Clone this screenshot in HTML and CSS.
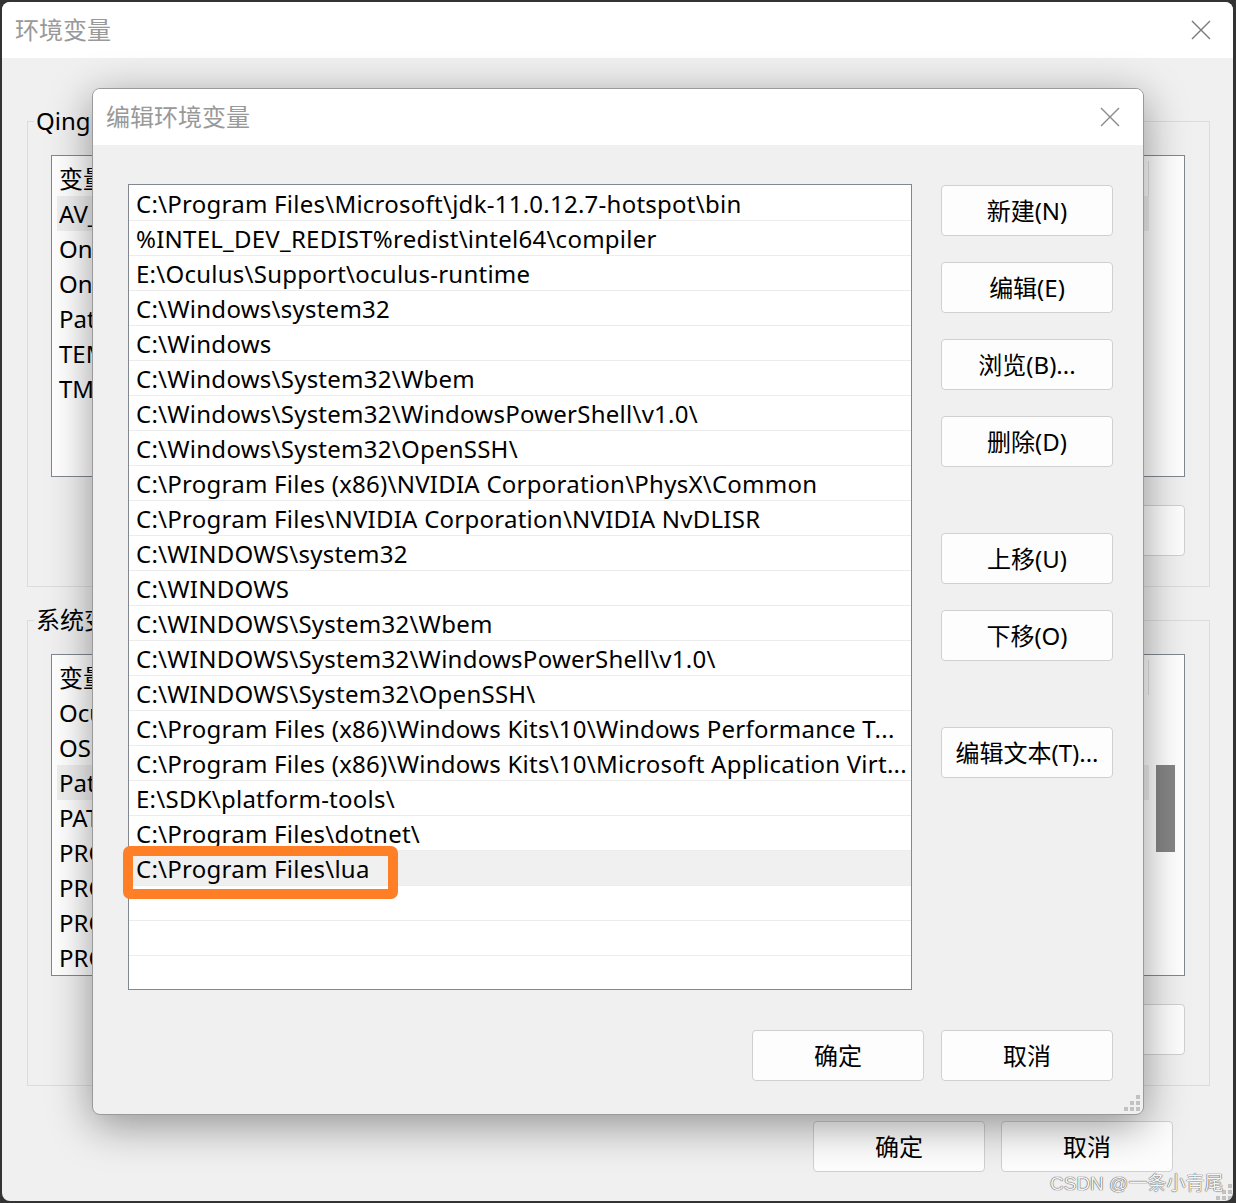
FILE: index.html
```html
<!DOCTYPE html>
<html>
  <head>
    <meta charset="utf-8">
    <title>环境变量</title>
    <link rel="stylesheet" href="styles.css">
  </head>
  <body>
    <div class="win">
      <div class="titlebar">
        <span class="title">环境变量</span>
        <svg class="close" width="20" height="20" viewBox="0 0 20 20"><path d="M1 1L19 19M19 1L1 19"/></svg>
      </div>

      <div class="win-body">
        <fieldset class="group">
          <legend>Qing 的用户变量(U)</legend>
          <div class="lv">
            <div class="lv-cols">
              <div class="lv-row lv-head"><span class="c-name">变量</span><span class="c-val"></span></div>
              <div class="lv-row sel"><span class="c-name">AV_HOME</span><span class="c-val"></span></div>
              <div class="lv-row"><span class="c-name">OneDrive</span><span class="c-val"></span></div>
              <div class="lv-row"><span class="c-name">OneDrive</span><span class="c-val"></span></div>
              <div class="lv-row"><span class="c-name">Path</span><span class="c-val"></span></div>
              <div class="lv-row"><span class="c-name">TEMP</span><span class="c-val"></span></div>
              <div class="lv-row"><span class="c-name">TMP</span><span class="c-val"></span></div>
            </div>
          </div>
          <div class="group-btns">
            <button class="btn">新建(N)...</button>
            <button class="btn">编辑(E)...</button>
            <button class="btn">删除(D)</button>
          </div>
        </fieldset>

        <fieldset class="group">
          <legend>系统变量(S)</legend>
          <div class="lv">
            <div class="lv-cols">
              <div class="lv-row lv-head"><span class="c-name">变量</span><span class="c-val"></span></div>
              <div class="lv-row"><span class="c-name">Oculus</span><span class="c-val"></span></div>
              <div class="lv-row"><span class="c-name">OS</span><span class="c-val"></span></div>
              <div class="lv-row sel"><span class="c-name">Path</span><span class="c-val"></span></div>
              <div class="lv-row"><span class="c-name">PATH</span><span class="c-val"></span></div>
              <div class="lv-row"><span class="c-name">PROC</span><span class="c-val"></span></div>
              <div class="lv-row"><span class="c-name">PROC</span><span class="c-val"></span></div>
              <div class="lv-row"><span class="c-name">PROC</span><span class="c-val"></span></div>
              <div class="lv-row"><span class="c-name">PROC</span><span class="c-val"></span></div>
            </div>
            <div class="lv-scroll"><div class="thumb"></div></div>
          </div>
          <div class="group-btns">
            <button class="btn">新建(W)...</button>
            <button class="btn">编辑(I)...</button>
            <button class="btn">删除(L)</button>
          </div>
        </fieldset>

        <div class="win-btns">
          <button class="btn">确定</button>
          <button class="btn">取消</button>
        </div>
      </div>

      <svg class="grip win-grip" width="16" height="16" viewBox="0 0 16 16"><path d="M12 0h4v4h-4zM6 6h4v4H6zM12 6h4v4h-4zM0 12h4v4H0zM6 12h4v4H6zM12 12h4v4h-4z"/></svg>

      <!-- 编辑环境变量 dialog, on top of the main window -->
      <div class="dialog">
        <div class="dlg-title">
          <span class="title">编辑环境变量</span>
          <svg class="close" width="20" height="20" viewBox="0 0 20 20"><path d="M1 1L19 19M19 1L1 19"/></svg>
        </div>
        <div class="dlg-body">
          <div class="dlg-main">
            <div class="paths">
              <div class="path">C:\Program Files\Microsoft\jdk-11.0.12.7-hotspot\bin</div>
              <div class="path">%INTEL_DEV_REDIST%redist\intel64\compiler</div>
              <div class="path">E:\Oculus\Support\oculus-runtime</div>
              <div class="path">C:\Windows\system32</div>
              <div class="path">C:\Windows</div>
              <div class="path">C:\Windows\System32\Wbem</div>
              <div class="path">C:\Windows\System32\WindowsPowerShell\v1.0\</div>
              <div class="path">C:\Windows\System32\OpenSSH\</div>
              <div class="path">C:\Program Files (x86)\NVIDIA Corporation\PhysX\Common</div>
              <div class="path">C:\Program Files\NVIDIA Corporation\NVIDIA NvDLISR</div>
              <div class="path">C:\WINDOWS\system32</div>
              <div class="path">C:\WINDOWS</div>
              <div class="path">C:\WINDOWS\System32\Wbem</div>
              <div class="path">C:\WINDOWS\System32\WindowsPowerShell\v1.0\</div>
              <div class="path">C:\WINDOWS\System32\OpenSSH\</div>
              <div class="path">C:\Program Files (x86)\Windows Kits\10\Windows Performance T...</div>
              <div class="path">C:\Program Files (x86)\Windows Kits\10\Microsoft Application Virt...</div>
              <div class="path">E:\SDK\platform-tools\</div>
              <div class="path">C:\Program Files\dotnet\</div>
              <div class="path sel">C:\Program Files\lua</div>
              <div class="path"></div>
              <div class="path"></div>
              <div class="path"></div>
            </div>
            <div class="side">
              <button class="btn">新建(N)</button>
              <button class="btn">编辑(E)</button>
              <button class="btn">浏览(B)...</button>
              <button class="btn">删除(D)</button>
              <button class="btn gap">上移(U)</button>
              <button class="btn">下移(O)</button>
              <button class="btn gap">编辑文本(T)...</button>
            </div>
          </div>
          <div class="dlg-foot">
            <button class="btn">确定</button>
            <button class="btn">取消</button>
          </div>
          <div class="mark"></div>
        </div>
        <svg class="grip dlg-grip" width="16" height="16" viewBox="0 0 16 16"><path d="M12 0h4v4h-4zM6 6h4v4H6zM12 6h4v4h-4zM0 12h4v4H0zM6 12h4v4H6zM12 12h4v4h-4z"/></svg>
      </div>
    </div>

    <div class="watermark">CSDN @一条小青尾</div>
  </body>
</html>
```

FILE: styles.css
```css
* {
  box-sizing: border-box;
}

html,
body {
  margin: 0;
  height: 100%;
}

body {
  position: relative;
  overflow: hidden;
  background: #333;
  font-family: "Noto Sans", "Noto Sans CJK SC", sans-serif;
  font-size: 24px;
  color: #000;
}

/* main window */
.win {
  position: relative;
  width: 1231px;
  height: 1199px;
  margin: 2px 0 0 2px;
  background: #f0f0f0;
  border-radius: 8px;
  overflow: hidden;
}

.titlebar {
  display: flex;
  align-items: center;
  justify-content: space-between;
  height: 56px;
  padding: 0 22px 0 13px;
  background: #fff;
}

.title {
  color: #999;
  font-size: 24px;
  line-height: 1;
}

.close path {
  fill: none;
  stroke: #7a7a7a;
  stroke-width: 1.4;
}

.win-body {
  padding: 46px 23px 0 25px;
}

.group {
  min-width: 0;
  margin: 0;
  padding: 17px 24px 30px 6px;
  border: 1px solid #dcdcdc;
}

.group + .group {
  margin-top: 16px;
}

.group legend {
  padding: 0 2px;
  font-size: 24px;
  line-height: 34px;
}

.group > .lv,
.group > .group-btns {
  margin-left: 17px;
}

.lv {
  display: flex;
  height: 322px;
  border: 1px solid #828790;
  background: #fff;
  overflow: hidden;
}

.lv-cols {
  width: 1097px;
  flex: none;
  padding-top: 5px;
}

.lv-row {
  display: flex;
  height: 35px;
  margin-left: 5px;
  line-height: 35px;
  white-space: nowrap;
  overflow: hidden;
}

.lv-row span {
  padding-left: 2px;
}

.lv-row.sel {
  background: #f0f0f0;
}

.c-name {
  width: 380px;
  flex: none;
}

.c-val {
  flex: 1;
}

.lv-head .c-val {
  border-right: 1px solid #e3e3e3;
}

.lv-scroll {
  flex: 1;
}

.thumb {
  width: 19px;
  height: 87px;
  margin: 110px 0 0 7px;
  background: #858585;
}

.group-btns {
  display: flex;
  justify-content: flex-end;
  gap: 16px;
  margin-top: 28px;
}

.btn {
  width: 172px;
  height: 51px;
  padding: 0;
  border: 1px solid #d0d0d0;
  border-radius: 4px;
  background: #fdfdfd;
  font-family: inherit;
  font-size: 24px;
  color: #000;
  line-height: 1;
}

.win-btns {
  display: flex;
  justify-content: flex-end;
  gap: 16px;
  margin-top: 35px;
  padding-right: 37px;
}

.grip {
  position: absolute;
  fill: #c2c2c2;
}

.win-grip {
  right: 1px;
  bottom: 1px;
}

/* edit dialog */
.dialog {
  position: absolute;
  left: 90px;
  top: 86px;
  width: 1052px;
  height: 1027px;
  background: #f0f0f0;
  border: 1px solid #9a9a9a;
  border-radius: 8px;
  box-shadow: 0 10px 44px rgba(0, 0, 0, .4);
  overflow: hidden;
}

.dlg-title {
  display: flex;
  align-items: center;
  justify-content: space-between;
  height: 56px;
  padding: 0 23px 0 13px;
  background: #fff;
}

.dlg-title .close path {
  stroke: #8a8a8a;
}

.dlg-body {
  position: relative;
  padding: 39px 30px 0 35px;
}

.dlg-main {
  display: flex;
  gap: 29px;
}

.paths {
  width: 784px;
  height: 806px;
  flex: none;
  padding-top: 1px;
  border: 1px solid #828790;
  background: #fff;
  overflow: hidden;
}

.path {
  height: 35px;
  padding-left: 7px;
  border-bottom: 1px solid #ececec;
  line-height: 35px;
  letter-spacing: .25px;
  white-space: nowrap;
  overflow: hidden;
  text-overflow: ellipsis;
}

.path.sel {
  background: #f0f0f0;
}

.side {
  display: flex;
  flex-direction: column;
  gap: 26px;
  padding-top: 1px;
}

.side .gap {
  margin-top: 40px;
}

.dlg-foot {
  display: flex;
  justify-content: flex-end;
  gap: 17px;
  margin-top: 40px;
}

/* annotation box round the new entry */
.mark {
  position: absolute;
  left: 30px;
  top: 701px;
  width: 275px;
  height: 53px;
  border: 10px solid #ff7f27;
  border-radius: 7px;
}

.dlg-grip {
  right: 3px;
  bottom: 3px;
}

.watermark {
  position: absolute;
  left: 1050px;
  top: 1172px;
  font-family: "Liberation Sans", "Noto Sans CJK SC", sans-serif;
  font-size: 19px;
  line-height: 24px;
  color: #f4f4f4;
  text-shadow: 0 0 1px rgba(0, 0, 0, .8), 0 0 1px rgba(0, 0, 0, .5);
  white-space: nowrap;
}
```
